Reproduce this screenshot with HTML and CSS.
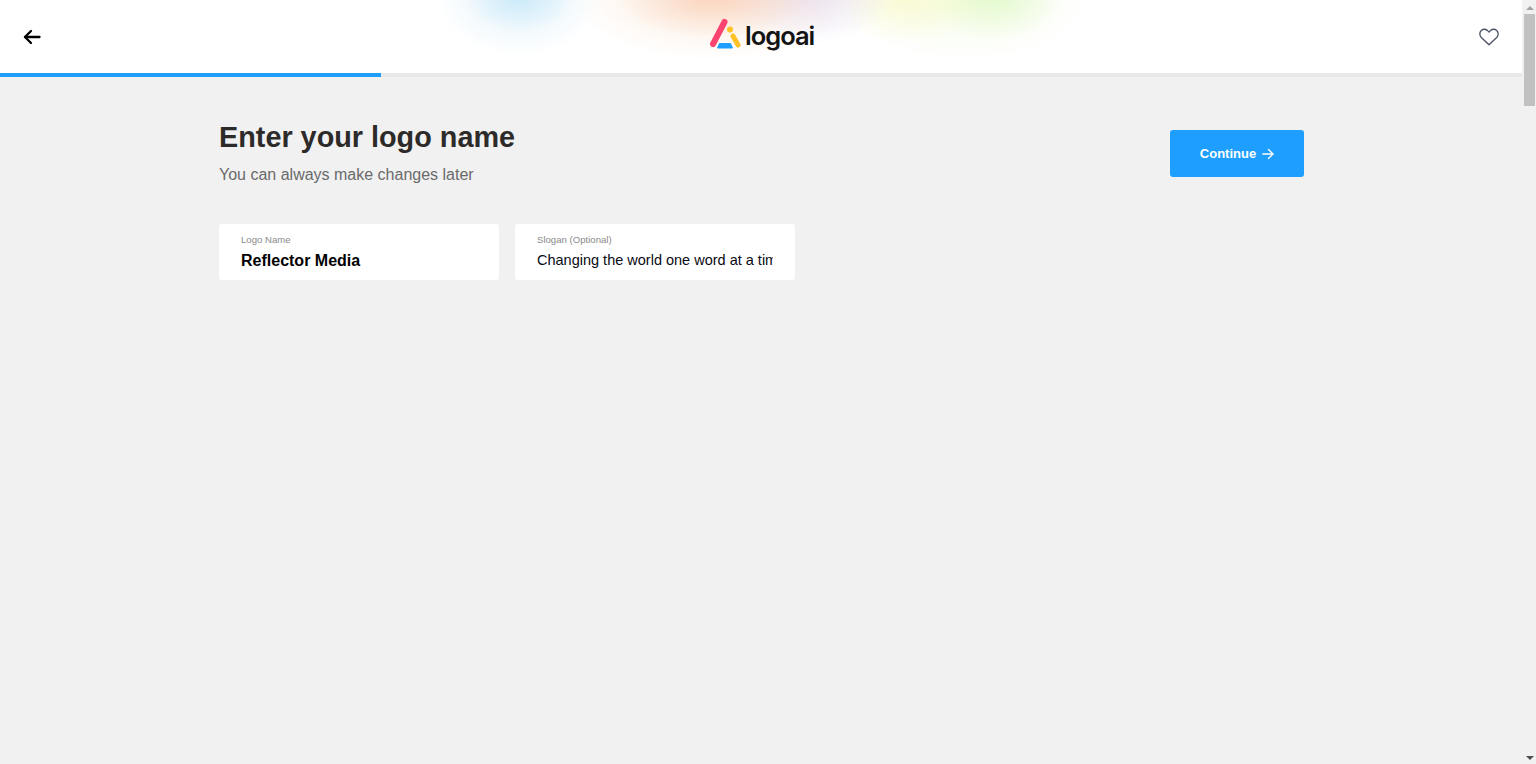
FILE: index.html
```html
<!DOCTYPE html>
<html lang="en">
<head>
<meta charset="utf-8">
<title>Enter your logo name</title>
<link rel="stylesheet" href="styles.css">
</head>
<body>
<div class="page">
  <div class="view">
    <header class="topbar">
      <div class="glow"></div>
      <button class="icon-btn" aria-label="Back">
        <svg width="18" height="16" viewBox="0 0 18 16" fill="none" stroke="#000" stroke-width="2.300" stroke-linecap="round" stroke-linejoin="round"><path d="M16.500 8H2"/><path d="M8 2 2 8l6 6"/></svg>
      </button>
      <div class="logo">
        <svg class="logo-mark" width="36" height="32" viewBox="0 0 36 32">
          <path d="M4 26 15.500 4" stroke="#fb4570" stroke-width="6" stroke-linecap="round" fill="none"/>
          <circle cx="21" cy="11.500" r="3" fill="#fdc228"/>
          <path d="M24 18 29 27" stroke="#fdc228" stroke-width="5" stroke-linecap="round" fill="none"/>
          <path d="M10.500 25.500h11l2 4.500H8.500z" fill="#1e9fff" stroke="#1e9fff" stroke-linejoin="round"/>
        </svg>
        <span class="logo-text">logoai</span>
      </div>
      <button class="icon-btn heart" aria-label="Favourites">
        <svg width="20" height="18" viewBox="0 0 20 18" fill="none" stroke="#4f5468" stroke-width="1.400" stroke-linejoin="round"><path d="M10 16.800 2.300 9.400C.3 7.400.4 4.300 2.300 2.500c2-1.800 5-1.500 6.600.4L10 4.100l1.100-1.200c1.600-1.900 4.600-2.200 6.600-.4 1.900 1.800 2 4.900 0 6.900z"/></svg>
      </button>
    </header>
    <div class="progress"><div class="progress-fill"></div></div>
    <main class="content">
      <div class="head-row">
        <div class="titles">
          <h1 class="title">Enter your logo name</h1>
          <p class="subtitle">You can always make changes later</p>
        </div>
        <button class="continue">Continue
          <svg width="12" height="12" viewBox="0 0 12 12" fill="none" stroke="#fff" stroke-width="1.300" stroke-linecap="round" stroke-linejoin="round"><path d="M.8 6h10"/><path d="M6.500 1.500 11 6l-4.500 4.500"/></svg>
        </button>
      </div>
      <div class="fields">
        <div class="field">
          <span class="field-label">Logo Name</span>
          <span class="field-value strong">Reflector Media</span>
        </div>
        <div class="field">
          <span class="field-label">Slogan (Optional)</span>
          <span class="field-value">Changing the world one word at a time</span>
        </div>
      </div>
    </main>
  </div>
  <aside class="scrollbar">
    <span class="arrow up"></span>
    <span class="thumb"></span>
    <span class="track"></span>
    <span class="arrow down"></span>
  </aside>
</div>
</body>
</html>
```
FILE: styles.css
```css
* { box-sizing: border-box; }
html, body { margin: 0; height: 100%; overflow: hidden; }
body { font-family: "Liberation Sans", Arial, sans-serif; background: #f1f1f1; }
.page { display: flex; height: 764px; }
.view { flex: 1; min-width: 0; display: flex; flex-direction: column; }

.topbar {
  position: relative;
  height: 73px;
  background: #fff;
  display: flex;
  align-items: center;
  justify-content: space-between;
  padding: 0 23px 0 23px;
  overflow: hidden;
}
.glow {
  position: absolute;
  left: 420px;
  top: -90px;
  width: 690px;
  height: 160px;
  background:
    radial-gradient(ellipse 55px 36px at 99px 86px, rgba(170,222,248,.45), rgba(170,222,248,0) 100%),
    radial-gradient(ellipse 84px 62px at 99px 84px, rgba(205,232,246,.55), rgba(205,232,246,.25) 60%, rgba(205,232,246,0) 100%),
    radial-gradient(ellipse 95px 42px at 292px 86px, rgba(248,195,165,.6), rgba(248,195,165,0) 100%),
    radial-gradient(ellipse 140px 66px at 290px 84px, rgba(250,222,198,.55), rgba(250,222,198,.25) 60%, rgba(250,222,198,0) 100%),
    radial-gradient(ellipse 85px 50px at 388px 84px, rgba(215,200,230,.55), rgba(215,200,230,0) 100%),
    radial-gradient(ellipse 75px 46px at 487px 88px, rgba(250,248,190,.6), rgba(250,248,190,0) 100%),
    radial-gradient(ellipse 70px 50px at 575px 82px, rgba(215,248,185,.65), rgba(215,248,185,0) 100%),
    radial-gradient(ellipse 125px 68px at 545px 84px, rgba(240,250,220,.65), rgba(240,250,220,0) 100%);
}
.icon-btn {
  position: relative;
  border: 0;
  padding: 0;
  background: none;
  display: flex;
  line-height: 0;
}
.heart { margin-top: 1px; }
.logo {
  position: absolute;
  left: 709px;
  top: 18px;
  display: flex;
  align-items: flex-start;
}
.logo-mark { display: block; }
.logo-text {
  font-family: Inter, sans-serif;
  font-weight: 600;
  font-size: 25.500px;
  line-height: 32px;
  letter-spacing: -1px;
  color: #141414;
  margin-top: 2px;
}

.progress {
  height: 4px;
  background: #e9e9e9;
}
.progress-fill { width: 381px; height: 4px; background: #1e9fff; }

.content { padding: 42px 218px 0 219px; }
.head-row { display: flex; justify-content: space-between; align-items: flex-start; }
.title {
  margin: 0;
  font-size: 28.800px;
  line-height: 36px;
  font-weight: 700;
  color: #2d2a2a;
}
.subtitle {
  margin: 11px 0 0;
  font-size: 16px;
  line-height: 18px;
  color: #6a6a6a;
}
.continue {
  margin-top: 11px;
  width: 134px;
  height: 47px;
  border: 0;
  border-radius: 3px;
  background: #1e9fff;
  color: #fff;
  font: 700 13px "Liberation Sans", Arial, sans-serif;
  display: flex;
  align-items: center;
  justify-content: center;
  gap: 6px;
}
.fields { display: flex; gap: 16px; margin-top: 40px; }
.field {
  width: 280px;
  height: 56px;
  background: #fff;
  border-radius: 3px;
  padding: 10px 22px 0;
  display: flex;
  flex-direction: column;
}
.field-label { font-size: 9.600px; line-height: 12px; color: #8a8a8a; }
.field-value {
  margin-top: 4px;
  font-size: 14.500px;
  line-height: 20px;
  color: #0a0a14;
  white-space: nowrap;
  overflow: hidden;
}
.field-value.strong { font-size: 16px; line-height: 22px; font-weight: 700; color: #000; }

.scrollbar {
  width: 14px;
  padding: 0 1px 0 2px;
  background: #f1f1f1;
  display: flex;
  flex-direction: column;
  align-items: center;
}
.arrow { width: 0; height: 0; border-left: 4px solid transparent; border-right: 4px solid transparent; }
.arrow.up { border-bottom: 4px solid #a3a3a3; margin: 6px 0 4px; }
.arrow.down { border-top: 4px solid #505050; margin: 3px 0 4px; }
.thumb { width: 100%; height: 92px; background: #c1c1c1; flex: none; }
.track { flex: 1; }
```
